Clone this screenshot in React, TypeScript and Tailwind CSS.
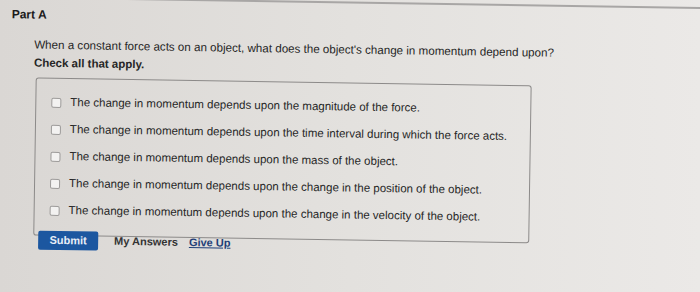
import React from 'react';

const options = [
  'The change in momentum depends upon the magnitude of the force.',
  'The change in momentum depends upon the time interval during which the force acts.',
  'The change in momentum depends upon the mass of the object.',
  'The change in momentum depends upon the change in the position of the object.',
  'The change in momentum depends upon the change in the velocity of the object.',
];

export default function App() {
  return (
    <div className="h-[292px] w-[700px] overflow-hidden bg-gradient-to-r from-[#dad7d4] via-[#e3e1de] to-[#ebe9e7] font-['Liberation_Sans',Arial,sans-serif] text-[#222]">
      <div className="origin-top-left rotate-[0.9deg]">
        <div className="mt-[-4px] h-[2px] w-[720px] bg-[#a8a6a5]" />
        <div className="pl-[12px] pt-[8px] text-[12px] font-bold leading-[16px] text-[#1a1a1a]">Part A</div>
        <div className="pl-[35px] pt-[15px] text-[11.6px] leading-[14px] text-[#262626]">
          When a constant force acts on an object, what does the object's change in momentum depend upon?
        </div>
        <div className="pl-[35px] pt-[4px] text-[11.5px] font-bold leading-[14px] text-[#262626]">Check all that apply.</div>
        <div className="ml-[37px] mt-[8px] w-[496px] rounded-[3px] border border-[#8c8a89] pb-[11px] pt-[10px]">
          {options.map((o) => (
            <div key={o} className="flex h-[27px] items-center">
              <span className="ml-[15px] mr-[9px] h-[10px] w-[10px] shrink-0 rounded-[2px] border border-[#9d9b9a] bg-[#f3f2f1]" />
              <span className="text-[11.5px] text-[#262626]">{o}</span>
            </div>
          ))}
        </div>
        <div className="ml-[42px] mt-[-5px] flex items-center">
          <button className="h-[19px] w-[60px] rounded-[2px] bg-[#1c57a0] text-[11px] font-bold text-[#e8eef7]">Submit</button>
          <span className="ml-[16px] text-[11px] font-bold text-[#333]">My Answers</span>
          <span className="ml-[11px] text-[11px] font-bold text-[#1f3f78] underline">Give Up</span>
        </div>
      </div>
    </div>
  );
}
